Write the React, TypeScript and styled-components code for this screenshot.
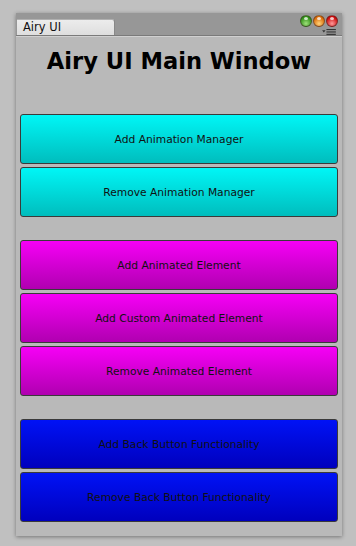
import React, { FC } from 'react'
import styled, { createGlobalStyle } from 'styled-components'

const GlobalStyle = createGlobalStyle`
	html, body {
		margin: 0;
		padding: 0;
		background: #c0c0c0;
		font-family: "DejaVu Sans", "Liberation Sans", sans-serif;
	}
`

type Tone = 'cyan' | 'magenta' | 'blue'

const tones: Record<Tone, [string, string]> = {
	cyan: ['#00f6f6', '#00bdbd'],
	magenta: ['#f600f6', '#b000b0'],
	blue: ['#0012f6', '#0000bd'],
}

const groups: { tone: Tone; labels: string[] }[] = [
	{ tone: 'cyan', labels: ['Add Animation Manager', 'Remove Animation Manager'] },
	{ tone: 'magenta', labels: ['Add Animated Element', 'Add Custom Animated Element', 'Remove Animated Element'] },
	{ tone: 'blue', labels: ['Add Back Button Functionality', 'Remove Back Button Functionality'] },
]

const App: FC = () => {
	return (
		<Page>
			<GlobalStyle />
			<Window>
				<TitleBar>
					<Tab>Airy UI</Tab>
					<Controls>
						<Lights>
							<Light color='green' />
							<Light color='orange' />
							<Light color='red' />
						</Lights>
						<MenuIcon width='16' height='7' viewBox='0 0 16 7'>
							<path d='M0 1.5h4l-2 2.5z' fill='#333' />
							<rect x='5' y='0' width='11' height='1.3' fill='#333' />
							<rect x='5' y='2.8' width='11' height='1.3' fill='#333' />
							<rect x='5' y='5.6' width='11' height='1.3' fill='#333' />
						</MenuIcon>
					</Controls>
				</TitleBar>
				<Content>
					<Heading>Airy UI Main Window</Heading>
					{groups.map((g) => (
						<Group key={g.tone}>
							{g.labels.map((l) => (
								<ActionButton key={l} tone={g.tone}>{l}</ActionButton>
							))}
						</Group>
					))}
				</Content>
			</Window>
		</Page>
	)
}

const Page = styled.div`
	width: 356px;
	height: 546px;
	padding: 13px 14px 0 16px;
	box-sizing: border-box;
`

const Window = styled.div`
	width: 326px;
	height: 523px;
	display: flex;
	flex-direction: column;
	background: #b9b9b9;
	box-shadow: 0 1px 4px rgba(0, 0, 0, 0.4);
`

const TitleBar = styled.div`
	height: 23px;
	background: #979797;
	border-bottom: 1px solid #7a7a7a;
	display: flex;
	align-items: flex-end;
	justify-content: space-between;
	box-sizing: border-box;
	flex-shrink: 0;
`

const Tab = styled.div`
	margin-left: 1px;
	width: 98px;
	height: 16px;
	background: linear-gradient(#ececec, #dedede);
	border-top-right-radius: 3px;
	border-top: 1px solid #b0b0b0;
	border-right: 1px solid #888;
	box-sizing: border-box;
	font-size: 11.5px;
	line-height: 15px;
	padding-left: 6px;
	color: #111;
`

const Controls = styled.div`
	display: flex;
	flex-direction: column;
	align-items: flex-end;
	padding-right: 4px;
	align-self: stretch;
	padding-top: 2px;
`

const Lights = styled.div`
	display: flex;
	gap: 1px;
`

const lightColors: Record<string, [string, string]> = {
	green: ['#9ee07a', '#2f8f16'],
	orange: ['#ffd27a', '#d86a06'],
	red: ['#ff9a9a', '#cc0a0a'],
}

const Light = styled.span<{ color: string }>`
	flex-shrink: 0;
	width: 12px;
	height: 12px;
	border-radius: 50%;
	border: 1px solid rgba(60, 40, 40, 0.55);
	box-sizing: border-box;
	background: radial-gradient(circle at 50% 75%, ${(p) => lightColors[p.color][0]} 0%, ${(p) => lightColors[p.color][1]} 70%);
	position: relative;
	&::after {
		content: '';
		position: absolute;
		left: 3px;
		top: 1px;
		width: 4px;
		height: 3px;
		border-radius: 50%;
		background: rgba(255, 255, 255, 0.75);
	}
`

const MenuIcon = styled.svg`
	margin-top: 2px;
	margin-right: 1px;
`

const Content = styled.div`
	flex: 1;
	padding: 0 4px 0 4px;
	display: flex;
	flex-direction: column;
	border-top: 1px solid #d0d0d0;
`

const Heading = styled.h1`
	margin: 10px 0 0;
	height: 34px;
	text-align: center;
	font-size: 22.6px;
	font-weight: bold;
	color: #000;
	line-height: 28px;
	font-family: "DejaVu Sans", sans-serif;
`

const Group = styled.div`
	display: flex;
	flex-direction: column;
	gap: 3px;
	margin-top: 33px;
	& + & {
		margin-top: 23px;
	}
`

const ActionButton = styled.button<{ tone: Tone }>`
	height: 50px;
	width: 100%;
	border: 1px solid #3a3a3a;
	border-radius: 3px;
	background: linear-gradient(${(p) => tones[p.tone][0]}, ${(p) => tones[p.tone][1]});
	font-family: "DejaVu Sans", sans-serif;
	font-size: 10.7px;
	color: #111;
	padding: 0;
	cursor: pointer;
`

export default App
